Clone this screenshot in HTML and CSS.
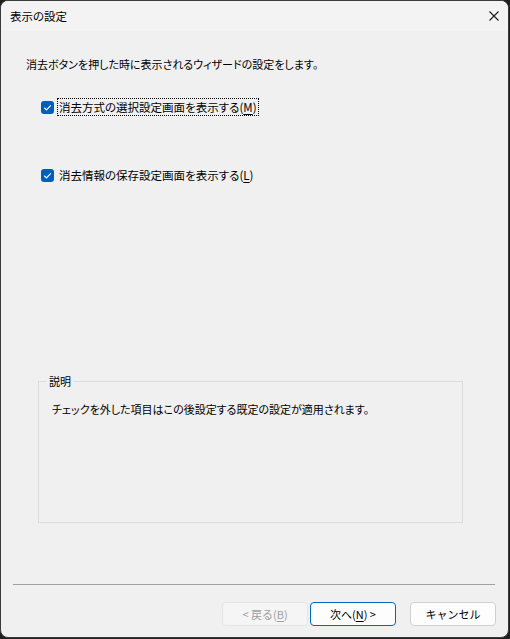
FILE: index.html
```html
<!DOCTYPE html>
<html lang="ja">
<head>
<meta charset="utf-8">
<title>表示の設定</title>
<link rel="stylesheet" href="styles.css">
</head>
<body>
<div class="window">
  <div class="titlebar">
    <span class="title">表示の設定</span>
    <span class="close">
      <svg width="10" height="10" viewBox="0 0 10 10"><path d="M0.5 0.5 L9.5 9.5 M9.5 0.5 L0.5 9.5" stroke="#1a1a1a" stroke-width="1.1" fill="none"/></svg>
    </span>
  </div>
  <div class="content">
    <p class="intro">消去ボタンを押した時に表示されるウィザードの設定をします。</p>
    <label class="check first">
      <span class="box"><svg width="13" height="13" viewBox="0 0 13 13"><path d="M3.3 6.8 L5.5 8.9 L9.8 4.4" stroke="#fff" stroke-width="1.2" fill="none"/></svg></span>
      <span class="label focus">消去方式の選択設定画面を表示する(<u>M</u>)</span>
    </label>
    <label class="check second">
      <span class="box"><svg width="13" height="13" viewBox="0 0 13 13"><path d="M3.3 6.8 L5.5 8.9 L9.8 4.4" stroke="#fff" stroke-width="1.2" fill="none"/></svg></span>
      <span class="label">消去情報の保存設定画面を表示する(<u>L</u>)</span>
    </label>
    <fieldset class="group">
      <legend>説明</legend>
      <p class="desc">チェックを外した項目はこの後設定する既定の設定が適用されます。</p>
    </fieldset>
  </div>
  <div class="footer">
    <div class="sep"></div>
    <div class="buttons">
      <button class="btn disabled">&lt; 戻る(<u>B</u>)</button>
      <button class="btn default">次へ(<u>N</u>) &gt;</button>
      <button class="btn cancel">キャンセル</button>
    </div>
  </div>
</div>
</body>
</html>
```
FILE: styles.css
```css
* { box-sizing: border-box; }
html, body {
  margin: 0;
  padding: 0;
  background: #1f1f1f;
}
body {
  width: 510px;
  height: 639px;
  font-family: "Noto Sans CJK JP", "Noto Sans", sans-serif;
  font-size: 11px;
  color: #000;
  font-feature-settings: "palt";
}
.window {
  width: 509px;
  height: 638px;
  border: 1px solid #3a3a3a;
  border-radius: 8px;
  background: #f0f0f0;
  overflow: hidden;
  display: flex;
  flex-direction: column;
}
.titlebar {
  height: 30px;
  flex: none;
  background: #f3f3f3;
  display: flex;
  align-items: center;
  justify-content: space-between;
  padding: 0 9px 0 9px;
}
.title {
  font-size: 11.5px;
  line-height: 16px;
  margin-top: -1px;
}
.close {
  display: flex;
  margin-top: -1px;
}
.content {
  flex: 1;
  display: flex;
  flex-direction: column;
  align-items: flex-start;
  padding-left: 25px;
}
.intro {
  margin: 25px 0 0 0;
  line-height: 16px;
}
.check {
  display: flex;
  align-items: center;
  height: 18px;
  margin-left: 15px;
}
.check.first { margin-top: 26px; }
.check.second { margin-top: 50px; }
.box {
  width: 13px;
  height: 13px;
  border-radius: 3px;
  background: #005fb8;
  display: flex;
  margin-right: 3px;
}
.label {
  font-size: 11.5px;
  line-height: 16px;
  padding: 0 1px;
  border: 1px dotted transparent;
}
.label.focus {
  border-color: #000;
}
u { text-decoration-thickness: 1px; text-underline-offset: 2px; }
.group {
  margin: 189px 0 0 12px;
  width: 425px;
  border: 1px solid #dcdcdc;
  padding: 0 13px 0 13px;
}
.group legend {
  padding: 0 2px;
  margin-left: -5px;
  line-height: 16px;
}
.desc {
  margin: 12px 0 0 0;
  line-height: 16px;
  height: 121px;
}
.footer {
  flex: none;
  display: flex;
  flex-direction: column;
}
.sep {
  height: 1px;
  background: #a0a0a0;
  margin: 0 13px 0 12px;
}
.buttons {
  display: flex;
  justify-content: flex-end;
  margin: 17px 12px 11px 0;
}
.btn {
  width: 86px;
  height: 24px;
  border-radius: 4px;
  border: 1px solid #d0d0d0;
  background: #fdfdfd;
  font-family: inherit;
  font-size: 11px;
  color: #000;
  padding: 0;
  line-height: 16px;
}
.btn.disabled {
  background: #f5f5f5;
  border-color: #e5e5e5;
  color: #a0a0a0;
  margin-right: 2px;
}
.btn.default {
  border-color: #0067c0;
  margin-right: 14px;
}
```
